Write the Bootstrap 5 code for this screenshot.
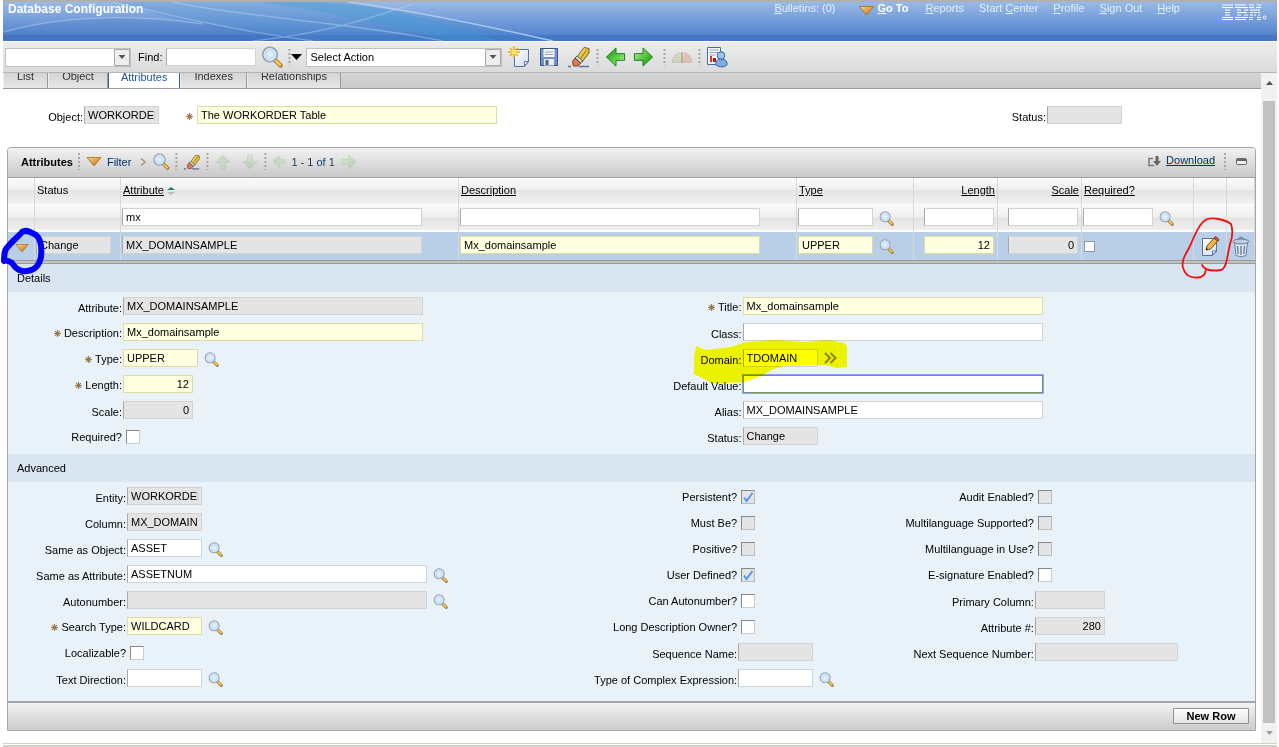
<!DOCTYPE html>
<html lang="en">
<head>
<meta charset="utf-8">
<meta name="viewport" content="width=device-width, initial-scale=1">
<title>Database Configuration</title>
<link rel="stylesheet" href="https://cdn.jsdelivr.net/npm/bootstrap@5.3.0/dist/css/bootstrap.min.css">
<style>
body{font:11px/14px "Liberation Sans",Arial,sans-serif;color:#000;background:#fff;padding:0 2px 0 3px}
svg{display:block;flex:none}
.btn{--bs-btn-padding-x:0;--bs-btn-padding-y:0;--bs-btn-border-width:0;--bs-btn-line-height:1;--bs-btn-font-size:11px;display:flex;align-items:center;justify-content:center;flex:none}
/* banner */
.banner{height:41px;border-top:2px solid #b0b0b0;background:linear-gradient(#9ab9e5,#5485cf 33px,#4677c6 33px);overflow:hidden;position:relative;color:#fff}
.banner .swoosh{position:absolute;left:0;top:0}
.banner h1{font-size:12px;line-height:14px;font-weight:bold;margin:0;position:relative;padding-left:5px}
.banner nav{gap:15px;position:relative;padding-right:10px;line-height:13px}
.banner a{color:#e4eefc;text-decoration:none}
.banner a.goto{color:#fff;font-weight:bold;margin:0 2px 0 8px}
.ibm{margin-left:27px}
/* main toolbar */
.tools{height:32px;border-top:1px solid #fff;border-bottom:1px solid #b4b4b4;background:linear-gradient(#ececed,#dadbdc);padding-left:2px}
.tools .btn{width:24px;height:24px}
.tools .file-group .btn{width:26px}
.tools label{padding-left:3px}
.sep{width:3px;height:17px;flex:none;background:repeating-linear-gradient(#a9a79d 0 2px,transparent 2px 4px);clip-path:inset(0 1px 0 0)}
.form-control,.form-select{font-size:11px;line-height:14px;height:18px;min-height:0;padding:0 3px 1px;border:1px solid #d3d3d3;border-left-color:#a9a9a9;border-radius:0;color:#000;background-color:#fff;flex:none}
.form-select{height:19px;padding-right:18px;background:#fff url("data:image/svg+xml,%3Csvg xmlns='http://www.w3.org/2000/svg' width='16' height='17'%3E%3Cpath fill='%23eee' stroke='%23aaa' d='M.5.5h15v16H.5z'/%3E%3Cpath fill='%23555' d='M4.500 6h7l-3.500 4z'/%3E%3C/svg%3E") no-repeat right center/16px 17px;border-color:#c0c0c0}
.f-70{width:70px}.f-75{width:75px}.f-90{width:90px}.f-143{width:143px}.f-300{width:300px}
.f-app{width:126px}.f-action{width:196px}
.form-control:read-only{background:#e4e4e4}
.form-control.need{background:#ffffe1;border-color:#dcdca4}
.form-control.active-field{border-color:#8b8478;box-shadow:0 0 0 1px #7fb0f5}
/* tabs */
.tabs{height:16px;overflow:hidden;background:linear-gradient(#d4d4d4,#cacaca);border-bottom:1px solid #999;align-items:stretch}
.tabs a{display:flex;align-items:flex-end;justify-content:center;padding:0 13px 5px;color:#333;text-decoration:none;background:linear-gradient(#d4d4d4,#e6e6e6);border-right:1px solid #999;border-left:1px solid #eee;line-height:14px;height:15px}
.tabs a.active{background:#fff;color:#1c56a4;border-color:#38619b;padding:0 12px 5px;height:16px}
/* scroll column */
.scroller{width:16px;background:#f1f1f1;flex:none}
.scroller .thumb{background:#c1c1c1;width:12px;margin:16px 0 0}
.record{height:18px;margin:17px 139px 23px 0}
/* table panel */
.panel{border:1px solid #a5a5a5;border-radius:4px 4px 0 0;margin:0 5px 11px 4px;background:#eaf2f9}
.panel-bar{height:30px;background:linear-gradient(#f2f2f2,#c9c9c9);border-bottom:1px solid #a0a0a0;border-radius:3px 3px 0 0;padding:0 7px 2px 13px;gap:5px;color:#123a5e}
.panel-bar a{color:#003366}
.grid{table-layout:fixed;width:100%;border-collapse:separate;border-spacing:0}
.grid th,.grid td{padding:4px 0 0 1px;vertical-align:top;border-right:1px solid #d8d8d8;font-weight:normal}
.grid th{height:26px;padding:5px 2px 0;background:linear-gradient(#fdfdfd,#ededed 12px,#e3e3e3 13px,#f3f3f3)}
.grid th a{color:#000}
.grid .filter td{height:28px;background:linear-gradient(#fbfbfb,#efefef 13px,#e2e2e2 14px,#efefef 26px,#fff 26px)}
.grid .picked td{height:28px;background:#b9cfe7}
.grid td.num{padding-right:3px}
.num{text-align:right}
.grid td.num>div{justify-content:flex-end}
.lookup{margin:3px 0 0 6px;align-self:flex-start}
.split{height:4px;background:#c2c2bf;border-top:1px solid #999;border-bottom:1px solid #999}
.band{height:28px;margin:0;padding:7px 9px;background:#d9e5f0;font-size:11px;line-height:14px}
.fields{padding:5px 0 1px}
.fields.adv{display:grid;grid-template-columns:45% 25% 30%;padding-bottom:6px}
.fld{display:flex;height:26px;align-items:flex-start;position:relative}
.fld label{width:var(--lab);flex:none;text-align:right;padding:4px 1px 0 0;line-height:14px;white-space:nowrap}
.fld label.req{padding-top:3px}
.fld label svg{display:inline-block;vertical-align:baseline}
.tick{appearance:none;width:14px;height:14px;margin:3px 0 0 3px;border:1px solid #ccc;border-top-color:#888;border-left-color:#888;background:#fff;flex:none}
.tick:disabled{background:#e4e4e4;border-color:#888 #bbb #bbb #888}
.tick:checked{background:#e4e4e4 url("data:image/svg+xml,%3Csvg xmlns='http://www.w3.org/2000/svg' width='12' height='12' viewBox='0 0 12 12'%3E%3Cpath fill='none' stroke='%235596ee' stroke-width='2' d='M2 6.500L4.500 10 10.500 2'/%3E%3C/svg%3E") no-repeat center/12px 12px}
.chk label{padding:3px 1px 0 0}
.lab-a{--lab:115px}.lab-b{--lab:111px}.lab-c{--lab:119px}.lab-d{--lab:169px}.lab-e{--lab:154px}
.rowtick{appearance:none;width:11px;height:11px;border:1px solid #8a99a8;background:#fff;margin:5px 0 0 1px;display:block}
.panel-foot{height:29px;border-top:2px solid #a5a5a5;background:linear-gradient(#f3f3f3,#cbcbcb);padding:0 6px 1px 0}
.newrow{width:76px;height:16px;font-weight:bold;font-size:11px;--bs-btn-color:#000;border:1px solid #909090;border-radius:1px;background:linear-gradient(#fff,#e2e2e2)}
.base{height:4px;border-top:1px solid #d4d0c8;border-bottom:2px solid #d4d0c8}
/* pen marks drawn over the controls they point at */
.pen{position:absolute;z-index:3;pointer-events:none}
.pen-blue{left:-9px;top:-7px}
.pen-red{left:-16px;top:-18px}
.pen-yellow{left:54px;top:-9px;mix-blend-mode:multiply}
</style>
</head>
<body class="d-flex flex-column min-vh-100">
<svg width="0" height="0" class="position-absolute" aria-hidden="true">
<defs>
<linearGradient id="gn" x2="1" y2="1"><stop stop-color="#c4f5b2"/><stop offset=".5" stop-color="#58c83f"/><stop offset="1" stop-color="#138a17"/></linearGradient>
<linearGradient id="gold" x2="1" y2="1"><stop stop-color="#fbd78c"/><stop offset="1" stop-color="#c0700f"/></linearGradient>
<radialGradient id="lens"><stop stop-color="#f2f9ff"/><stop offset="1" stop-color="#a9cdf0"/></radialGradient>
<linearGradient id="page" x2="1" y2="1"><stop stop-color="#fff"/><stop offset="1" stop-color="#cfdcf0"/></linearGradient>
<linearGradient id="rub" x2="1" y2="1"><stop stop-color="#ffe873"/><stop offset="1" stop-color="#dba521"/></linearGradient>
<symbol id="mag" viewBox="0 0 22 22"><path d="M14 14l5.500 5.500" stroke="#9c7b3c" stroke-width="4.500" stroke-linecap="round"/><path d="M15 15l4 4" stroke="#ffc64a" stroke-width="2.500" stroke-linecap="round"/><circle cx="9" cy="8.500" r="7.300" fill="url(#lens)" stroke="#99a1aa" stroke-width="1.600"/><circle cx="9" cy="8.500" r="5.800" fill="none" stroke="#e4f0fb"/></symbol>
<symbol id="eraser" viewBox="0 0 22 22"><path d="M0 20.500h3M11 20.500h10" stroke="#5b6d9c" stroke-width="1.500"/><path d="M9 11L16 1.500l5 1V7L14 16z" fill="url(#rub)" stroke="#77601d"/><path d="M19 3.500l-7 9.500" stroke="#8a6b18"/><path d="M7 12l2-2 5.500 4.500-2 2.500z" fill="#d5e3dc" stroke="#466"/><path d="M4.500 15.500L7 12l5.500 5-2.500 3H5.500z" fill="#e07a5c" stroke="#843520"/></symbol>
<symbol id="arrow" viewBox="0 0 22 22"><path d="M1.500 7.500h9V1.500L20.500 11l-10 9.500v-6h-9z" fill="url(#gn)" stroke="#187a1a" stroke-linejoin="round"/></symbol>
<symbol id="tri" viewBox="0 0 15 9"><path d="M.5.5h14L8 8.500H7z" fill="url(#gold)" stroke="#a86a1c" stroke-width=".8"/></symbol>
<symbol id="st" viewBox="0 0 8 8"><path d="M4 0v8M0 4h8M1.200 1.200l5.600 5.600M6.800 1.200L1.200 6.800" stroke="#96794c" stroke-width="1.300"/></symbol>
</defs>
</svg>

<header class="banner d-flex justify-content-between align-items-start">
<svg class="swoosh" width="560" height="39" viewBox="0 0 560 39" aria-hidden="true">
<path d="M110 0C180 20 240 33 310 39H550C480 20 400 6 310 0z" fill="#3f86cc" opacity=".25"/>
<path d="M255 0c60 8 130 22 190 39h50C450 22 400 10 345 0z" fill="#3d9bd5" opacity=".35"/>
<path d="M0 30C60 14 130 12 200 22s80 14 110 17H0z" fill="#3468b8" opacity=".15"/>
<path d="M0 30C60 14 130 12 200 22M110 0c70 16 130 30 200 39M170 0c60 14 190 22 270 39M250 39C330 30 370 15 410 2" fill="none" stroke="#c6def5" stroke-width="1.300" opacity=".4"/>
<path d="M345 0c60 8 130 22 205 39" fill="none" stroke="#bcd6f5" stroke-width="1.500" opacity=".8"/>
</svg>
<h1>Database Configuration</h1>
<nav class="d-flex align-items-start">
<a href="#"><u>B</u>ulletins: (0)</a>
<a href="#" class="goto d-flex gap-1"><svg width="15" height="9" class="mt-1"><use href="#tri"/></svg><span><u>G</u>o To</span></a>
<a href="#"><u>R</u>eports</a>
<a href="#">Start <u>C</u>enter</a>
<a href="#"><u>P</u>rofile</a>
<a href="#"><u>S</u>ign Out</a>
<a href="#"><u>H</u>elp</a>
<svg class="ibm" width="45" height="18" viewBox="0 0 45 18" role="img" aria-label="IBM"><path d="M0 3h11M0 5.500h11M3 8h5M3 10.500h5M3 13h5M0 15.500h11M0 17.500h11M13 3h11M13 5.500h13M15 8h4M22 8h4M15 10.500h10M15 13h4M22 13h4M13 15.500h13M13 17.500h11M27 3h5M35 3h4M27 5.500h5M34 5.500h5M28 8h10M28 10.500h3M32 10.500h3M36 10.500h2M28 13h3M32 13h2M36 13h2M27 15.500h4M35 15.500h4M27 17.500h4M35 17.500h4" stroke="#fff" stroke-width="1.200"/><circle cx="42.500" cy="15.500" r="1.500" fill="none" stroke="#fff"/></svg>
</nav>
</header>

<div class="tools d-flex align-items-center gap-1" role="toolbar">
<select class="form-select f-app" aria-label="Saved queries"><option></option></select>
<label for="find">Find:</label><input id="find" class="form-control f-90">
<button class="btn" aria-label="Search"><svg width="22" height="22"><use href="#mag"/></svg></button>
<div class="d-flex align-items-center"><span class="sep"></span><button class="btn w-auto" aria-label="Actions"><svg width="11" height="6" viewBox="0 0 11 6"><path d="M0 0h11L5.500 6z"/></svg></button></div>
<select class="form-select f-action" aria-label="Action"><option>Select Action</option></select>
<div class="file-group d-flex gap-1">
<button class="btn" aria-label="New"><svg width="22" height="22" viewBox="0 0 22 22"><path d="M6.500 3.500h14v12l-4 5h-10z" fill="url(#page)" stroke="#5a6f9e"/><path d="M16.500 20v-4.500h4z" fill="#fff" stroke="#5a6f9e"/><path d="M6 0v12M0 6h12M2 2l8 8M10 2l-8 8" stroke="#f3a80d" stroke-width="1.500"/><circle cx="6" cy="6" r="2.500" fill="#ffe35b"/></svg></button>
<button class="btn" aria-label="Save"><svg width="20" height="20" viewBox="0 0 20 20"><path d="M1.500 1.500h17v17h-17z" fill="#7391c6" stroke="#3c5483"/><path d="M4.500 2h11v8h-11z" fill="#f4f7fb"/><path d="M6 5h8M6 7.500h8" stroke="#99a"/><path d="M5 12h10v6.500H5z" fill="#e8ebef"/><path d="M6.500 13h3v5h-3z" fill="#51617e"/></svg></button>
<button class="btn" aria-label="Clear"><svg width="22" height="22"><use href="#eraser"/></svg></button>
</div>
<span class="sep"></span>
<button class="btn" aria-label="Previous record"><svg width="21" height="22" viewBox="0 0 22 22"><use href="#arrow" transform="rotate(180 11 11)" width="22" height="22"/></svg></button>
<button class="btn" aria-label="Next record"><svg width="21" height="22"><use href="#arrow"/></svg></button>
<span class="sep ms-1"></span>
<button class="btn" aria-label="KPI" ><svg width="22" height="14" viewBox="0 0 22 14" opacity=".6"><path d="M1 12A10 10 0 0 1 8 2.500L11 12z" fill="#bcd0a4"/><path d="M8 2.500a10 10 0 0 1 6 0L11 12z" fill="#efe18e"/><path d="M14 2.500A10 10 0 0 1 21 12H11z" fill="#e9a494"/><path d="M1 12.500h20A10 10 0 0 0 1 12.500z" fill="none" stroke="#b4b4aa"/><path d="M11 3v10" stroke="#777" stroke-width="1.500"/></svg></button>
<span class="sep"></span>
<button class="btn" aria-label="Run report"><svg width="22" height="22" viewBox="0 0 22 22"><path d="M1.500 1.500h13v17h-13z" fill="#f5f8fd" stroke="#4c689c"/><path d="M3.500 4h9M3.500 6.500h9M3.500 9h6" stroke="#90a1bc"/><path d="M4 10h2v6H4z" fill="#d32"/><path d="M7 12h3v4H7z" fill="#b81616"/><path d="M10 19c-1-5 3-6 5-6s7 1 6 6c-3 2.500-8 2.500-11 0z" fill="#7eaede" stroke="#34679f"/><circle cx="15" cy="9.500" r="3.800" fill="#9bc3ec" stroke="#34679f"/></svg></button>
</div>

<div class="d-flex flex-grow-1">
<main class="flex-grow-1">
<nav class="tabs d-flex" aria-label="Record tabs">
<a href="#">List</a><a href="#">Object</a><a href="#" class="active" aria-current="page">Attributes</a><a href="#">Indexes</a><a href="#">Relationships</a>
</nav>

<div class="record d-flex justify-content-between">
<div class="d-flex">
<div class="fld" style="--lab:81px"><label for="obj">Object:</label><input id="obj" class="form-control f-75" readonly value="WORKORDER"></div>
<div class="fld" style="--lab:38px"><label for="objd" class="req pe-1"><svg width="7" height="7"><use href="#st"/></svg></label><input id="objd" aria-label="Object description" class="form-control f-300 need" value="The WORKORDER Table"></div>
</div>
<div class="fld"><label for="ost" class="w-auto">Status:</label><input id="ost" class="form-control f-75" readonly></div>
</div>

<section class="panel">
<div class="panel-bar d-flex align-items-center">
<b class="text-black">Attributes</b><span class="sep"></span>
<svg width="16" height="9"><use href="#tri"/></svg><a href="#" class="text-decoration-none">Filter</a>
<svg width="7" height="8" viewBox="0 0 7 8" class="ms-1"><path d="M1 .5L5 4 1 7.500" fill="none" stroke="#9a9a8e" stroke-width="1.500"/></svg>
<button class="btn" aria-label="Filter table"><svg width="18" height="17"><use href="#mag"/></svg></button><span class="sep"></span>
<button class="btn" aria-label="Clear filter"><svg width="18" height="16"><use href="#eraser"/></svg></button><span class="sep"></span>
<svg width="18" height="16" viewBox="0 0 22 22" opacity=".18"><use href="#arrow" width="22" height="22" transform="rotate(-90 11 11)"/></svg>
<svg width="18" height="16" viewBox="0 0 22 22" opacity=".18" class="ms-1"><use href="#arrow" width="22" height="22" transform="rotate(90 11 11)"/></svg>
<span class="sep"></span>
<svg width="14" height="15" viewBox="0 0 22 22" opacity=".18"><use href="#arrow" width="22" height="22" transform="rotate(180 11 11)"/></svg>
<span>1 - 1 of 1</span>
<svg width="18" height="16" opacity=".18"><use href="#arrow"/></svg>
<svg class="ms-auto" width="13" height="11" viewBox="0 0 13 11"><path d="M5 2.500H1v7h5" fill="none" stroke="#777" stroke-width="1.500"/><path d="M7.500 0h3v5H13l-4 5-4-5h2.500z" fill="#666"/></svg>
<a href="#" class="pb-1">Download</a>
<span class="sep ms-1"></span>
<button class="btn ms-1" aria-label="Minimize"><svg width="12" height="8" viewBox="0 0 12 8"><rect x=".5" y=".5" width="10" height="6" rx="1" fill="#eee" stroke="#666"/><path d="M1 1h9v2H1z" fill="#666"/></svg></button>
</div>

<table class="grid">
<colgroup><col style="width:27px"><col style="width:86px"><col style="width:338px"><col style="width:338px"><col style="width:117px"><col style="width:84px"><col style="width:84px"><col style="width:112px"><col style="width:33px"><col style="width:28px"></colgroup>
<thead><tr><th></th><th>Status</th><th><a href="#">Attribute</a> <svg class="d-inline-block" width="8" height="8" viewBox="0 0 8 8"><path d="M0 3h8L4 0z" fill="#1a7d76"/><path d="M0 5h8L4 8z" fill="#bbb"/></svg></th><th><a href="#">Description</a></th><th><a href="#">Type</a></th><th class="num"><a href="#">Length</a></th><th class="num"><a href="#">Scale</a></th><th><a href="#">Required?</a></th><th></th><th></th></tr></thead>
<tbody>
<tr class="filter"><td></td><td></td>
<td><input class="form-control f-300" aria-label="Filter attribute" value="mx"></td>
<td><input class="form-control f-300" aria-label="Filter description"></td>
<td><div class="d-flex"><input class="form-control f-75" aria-label="Filter type"><button class="btn lookup" aria-label="Look up type"><svg width="15" height="15"><use href="#mag"/></svg></button></div></td>
<td class="num"><div class="d-flex"><input class="form-control f-70" aria-label="Filter length"></div></td>
<td class="num"><div class="d-flex"><input class="form-control f-70" aria-label="Filter scale"></div></td>
<td><div class="d-flex"><input class="form-control f-70" aria-label="Filter required"><button class="btn lookup" aria-label="Look up required"><svg width="15" height="15"><use href="#mag"/></svg></button></div></td>
<td></td><td></td></tr>
<tr class="picked">
<td class="position-relative"><button class="btn w-100 pt-2" aria-label="Hide row details"><svg width="14" height="8"><use href="#tri"/></svg></button>
<svg class="pen pen-blue" width="52" height="54" viewBox="0 0 52 54" aria-hidden="true"><path d="M7 24C12 17 20 11 23 7c4-3 8 0 14 3 5 4 6 12 5 22-2 9-6 13-14 14-8 1-12-3-15-8-3-2-6-3-8-2 0-5 0-9 2-12z" fill="none" stroke="#0000fe" stroke-width="6" stroke-linejoin="round"/></svg></td>
<td><input class="form-control f-75" readonly aria-label="Status" value="Change"></td>
<td><input class="form-control f-300" readonly aria-label="Attribute" value="MX_DOMAINSAMPLE"></td>
<td><input class="form-control f-300 need" aria-label="Description" value="Mx_domainsample"></td>
<td><div class="d-flex"><input class="form-control f-75 need" aria-label="Type" value="UPPER"><button class="btn lookup" aria-label="Look up type"><svg width="15" height="15"><use href="#mag"/></svg></button></div></td>
<td class="num"><div class="d-flex"><input class="form-control f-70 need num" aria-label="Length" value="12"></div></td>
<td class="num"><div class="d-flex"><input class="form-control f-70 num" readonly aria-label="Scale" value="0"></div></td>
<td><input type="checkbox" class="rowtick" aria-label="Required"></td>
<td class="position-relative"><button class="btn w-100" aria-label="Edit row"><svg width="19" height="21" viewBox="0 0 19 21"><path d="M1.500 2.500h14v13l-4 4h-10z" fill="url(#page)" stroke="#5a6f9e"/><path d="M11.500 19v-4h4z" fill="#fff" stroke="#5a6f9e"/><path d="M5 14l1-4 8-9 3.500 3-8 9z" fill="#f0b83e" stroke="#6e4c15"/><path d="M13 2l1.500-1.500L18 3.500 16.500 5z" fill="#d8584a" stroke="#823"/><path d="M5 14l.5-2 1.500 1.500z"/></svg></button>
<svg class="pen pen-red" width="56" height="66" viewBox="0 0 56 66" aria-hidden="true"><path d="M24 51c3 6 12 6 19 5 6-2 6-14 9-26 3-8 3-14 1-20-5-4-17-7-24-5-8 4-13 18-17 27C8 40 3 46 5 54c3 9 9 11 18 9 6-3 4-6 5-8" fill="none" stroke="#f01010" stroke-width="1.800" stroke-linecap="round"/></svg></td>
<td><button class="btn w-100" aria-label="Delete row"><svg width="18" height="22" viewBox="0 0 18 22"><path d="M2.500 6.500h13l-1.500 13q-5 2.500-10 0z" fill="#dfe9f4" stroke="#667c99"/><ellipse cx="9" cy="5.500" rx="7.800" ry="2.500" fill="#bccce0" stroke="#667c99"/><path d="M6.500 3q2.500-3 5 0M5.500 10l.7 8M9 10v9M12.500 10l-.7 8" fill="none" stroke="#667c99" stroke-width="1.400"/></svg></button></td>
</tr></tbody></table>
<div class="split"></div>

<h2 class="band">Details</h2>
<div class="row g-0 fields">
<div class="col-6 lab-a">
<div class="fld"><label for="a1">Attribute:</label><input id="a1" class="form-control f-300" readonly value="MX_DOMAINSAMPLE"></div>
<div class="fld"><label for="a2" class="req"><svg width="7" height="7"><use href="#st"/></svg> Description:</label><input id="a2" class="form-control f-300 need" value="Mx_domainsample"></div>
<div class="fld"><label for="a3" class="req"><svg width="7" height="7"><use href="#st"/></svg> Type:</label><input id="a3" class="form-control f-75 need" value="UPPER"><button class="btn lookup" aria-label="Look up type"><svg width="15" height="15"><use href="#mag"/></svg></button></div>
<div class="fld"><label for="a4" class="req"><svg width="7" height="7"><use href="#st"/></svg> Length:</label><input id="a4" class="form-control f-70 need num" value="12"></div>
<div class="fld"><label for="a5">Scale:</label><input id="a5" class="form-control f-70 num" readonly value="0"></div>
<div class="fld chk"><label for="a6">Required?</label><input id="a6" type="checkbox" class="tick"></div>
</div>
<div class="col-6 lab-b">
<div class="fld"><label for="b1" class="req"><svg width="7" height="7"><use href="#st"/></svg> Title:</label><input id="b1" class="form-control f-300 need" value="Mx_domainsample"></div>
<div class="fld"><label for="b2">Class:</label><input id="b2" class="form-control f-300"></div>
<div class="fld"><label for="b3">Domain:</label><input id="b3" class="form-control f-75" value="TDOMAIN"><button class="btn lookup" aria-label="Domain detail menu"><svg width="13" height="12" viewBox="0 0 13 12"><path d="M1 1l5 5-5 5M6.500 1l5 5-5 5" fill="none" stroke="#8b8370" stroke-width="2"/></svg></button>
<svg class="pen pen-yellow" width="162" height="44" viewBox="0 0 162 44" aria-hidden="true"><path d="M10 6l10 4 25-3 15-5 28-2 32 2 22-2 16 3 3 3v21l-10 1-12-3-42 1-12 4-8 5-18 7-20 1H26L8 34V18z" fill="#ff0"/></svg></div>
<div class="fld"><label for="b4">Default Value:</label><input id="b4" class="form-control f-300 active-field"></div>
<div class="fld"><label for="b5">Alias:</label><input id="b5" class="form-control f-300" value="MX_DOMAINSAMPLE"></div>
<div class="fld"><label for="b6">Status:</label><input id="b6" class="form-control f-75" readonly value="Change"></div>
</div>
</div>

<h2 class="band">Advanced</h2>
<div class="fields adv">
<div class="lab-c">
<div class="fld"><label for="c1">Entity:</label><input id="c1" class="form-control f-75" readonly value="WORKORDER"></div>
<div class="fld"><label for="c2">Column:</label><input id="c2" class="form-control f-75" readonly value="MX_DOMAINSAMPLE"></div>
<div class="fld"><label for="c3">Same as Object:</label><input id="c3" class="form-control f-75" value="ASSET"><button class="btn lookup" aria-label="Look up object"><svg width="15" height="15"><use href="#mag"/></svg></button></div>
<div class="fld"><label for="c4">Same as Attribute:</label><input id="c4" class="form-control f-300" value="ASSETNUM"><button class="btn lookup" aria-label="Look up attribute"><svg width="15" height="15"><use href="#mag"/></svg></button></div>
<div class="fld"><label for="c5">Autonumber:</label><input id="c5" class="form-control f-300" readonly><button class="btn lookup" aria-label="Look up autonumber"><svg width="15" height="15"><use href="#mag"/></svg></button></div>
<div class="fld"><label for="c6" class="req"><svg width="7" height="7"><use href="#st"/></svg> Search Type:</label><input id="c6" class="form-control f-75 need" value="WILDCARD"><button class="btn lookup" aria-label="Look up search type"><svg width="15" height="15"><use href="#mag"/></svg></button></div>
<div class="fld chk"><label for="c7">Localizable?</label><input id="c7" type="checkbox" class="tick"></div>
<div class="fld"><label for="c8">Text Direction:</label><input id="c8" class="form-control f-75"><button class="btn lookup" aria-label="Look up text direction"><svg width="15" height="15"><use href="#mag"/></svg></button></div>
</div>
<div class="lab-d">
<div class="fld chk"><label for="d1">Persistent?</label><input id="d1" type="checkbox" class="tick" checked disabled></div>
<div class="fld chk"><label for="d2">Must Be?</label><input id="d2" type="checkbox" class="tick" disabled></div>
<div class="fld chk"><label for="d3">Positive?</label><input id="d3" type="checkbox" class="tick" disabled></div>
<div class="fld chk"><label for="d4">User Defined?</label><input id="d4" type="checkbox" class="tick" checked disabled></div>
<div class="fld chk"><label for="d5">Can Autonumber?</label><input id="d5" type="checkbox" class="tick"></div>
<div class="fld chk"><label for="d6">Long Description Owner?</label><input id="d6" type="checkbox" class="tick"></div>
<div class="fld"><label for="d7">Sequence Name:</label><input id="d7" class="form-control f-75" readonly></div>
<div class="fld"><label for="d8">Type of Complex Expression:</label><input id="d8" class="form-control f-75"><button class="btn lookup" aria-label="Look up expression type"><svg width="15" height="15"><use href="#mag"/></svg></button></div>
</div>
<div class="lab-e">
<div class="fld chk"><label for="e1">Audit Enabled?</label><input id="e1" type="checkbox" class="tick" disabled></div>
<div class="fld chk"><label for="e2">Multilanguage Supported?</label><input id="e2" type="checkbox" class="tick" disabled></div>
<div class="fld chk"><label for="e3">Multilanguage in Use?</label><input id="e3" type="checkbox" class="tick" disabled></div>
<div class="fld chk"><label for="e4">E-signature Enabled?</label><input id="e4" type="checkbox" class="tick"></div>
<div class="fld"><label for="e5">Primary Column:</label><input id="e5" class="form-control f-70" readonly></div>
<div class="fld"><label for="e6">Attribute #:</label><input id="e6" class="form-control f-70 num" readonly value="280"></div>
<div class="fld"><label for="e7">Next Sequence Number:</label><input id="e7" class="form-control f-143" readonly></div>
</div>
</div>
<div class="panel-foot d-flex align-items-center justify-content-end"><button class="btn newrow">New Row</button></div>
</section>
</main>
<div class="scroller d-flex flex-column align-items-center" aria-hidden="true">
<svg width="7" height="4" viewBox="0 0 7 4" class="mt-2"><path d="M0 4h7L3.500 0z" fill="#505050"/></svg>
<div class="thumb flex-grow-1"></div>
<svg width="7" height="4" viewBox="0 0 7 4" class="my-2"><path d="M0 0h7L3.500 4z" fill="#a0a0a0"/></svg>
</div>
</div>
<footer class="base"></footer>
<script src="https://cdn.jsdelivr.net/npm/bootstrap@5.3.0/dist/js/bootstrap.bundle.min.js"></script>
</body>
</html>
